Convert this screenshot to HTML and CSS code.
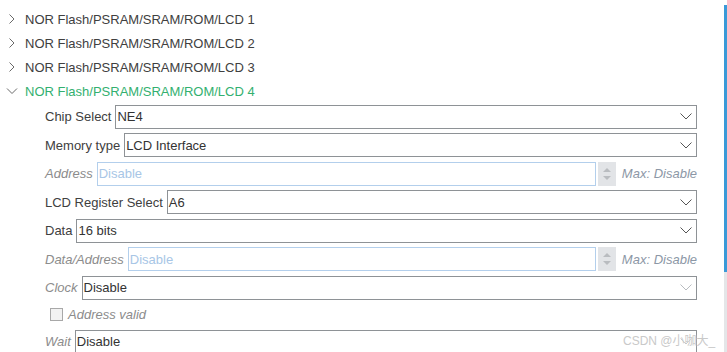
FILE: index.html
```html
<!DOCTYPE html>
<html>
<head>
<meta charset="utf-8">
<link rel="stylesheet" href="styles.css">
</head>
<body>
<div class="page">
  <div class="tree">
    <div class="node">
      <svg class="chev" viewBox="0 0 8 12" width="8" height="12"><path d="M1.5 1.5 L6 6 L1.5 10.5" fill="none" stroke="#6a6a6a" stroke-width="1"/></svg>
      <span>NOR Flash/PSRAM/SRAM/ROM/LCD 1</span>
    </div>
    <div class="node">
      <svg class="chev" viewBox="0 0 8 12" width="8" height="12"><path d="M1.5 1.5 L6 6 L1.5 10.5" fill="none" stroke="#6a6a6a" stroke-width="1"/></svg>
      <span>NOR Flash/PSRAM/SRAM/ROM/LCD 2</span>
    </div>
    <div class="node">
      <svg class="chev" viewBox="0 0 8 12" width="8" height="12"><path d="M1.5 1.5 L6 6 L1.5 10.5" fill="none" stroke="#6a6a6a" stroke-width="1"/></svg>
      <span>NOR Flash/PSRAM/SRAM/ROM/LCD 3</span>
    </div>
    <div class="node open">
      <svg class="chev down" viewBox="0 0 12 8" width="12" height="8"><path d="M1 1.5 L6 6.5 L11 1.5" fill="none" stroke="#6a6a6a" stroke-width="1"/></svg>
      <span>NOR Flash/PSRAM/SRAM/ROM/LCD 4</span>
    </div>
  </div>

  <div class="form">
    <div class="row">
      <span class="label">Chip Select</span>
      <div class="select"><span class="val">NE4</span><svg class="arrow" viewBox="0 0 12 7" width="12" height="7"><path d="M0.5 0.5 L6 6 L11.5 0.5" fill="none" stroke="#555" stroke-width="1"/></svg></div>
    </div>
    <div class="row">
      <span class="label">Memory type</span>
      <div class="select"><span class="val">LCD Interface</span><svg class="arrow" viewBox="0 0 12 7" width="12" height="7"><path d="M0.5 0.5 L6 6 L11.5 0.5" fill="none" stroke="#555" stroke-width="1"/></svg></div>
    </div>
    <div class="row">
      <span class="label dis">Address</span>
      <div class="input dis"><span class="val">Disable</span></div>
      <div class="spin"><svg viewBox="0 0 18 24" width="18" height="24"><path d="M5 10 L9 6 L13 10 Z" fill="#b9bcc0"/><path d="M5 14 L9 18 L13 14 Z" fill="#b9bcc0"/></svg></div>
      <span class="max">Max: Disable</span>
    </div>
    <div class="row">
      <span class="label">LCD Register Select</span>
      <div class="select"><span class="val">A6</span><svg class="arrow" viewBox="0 0 12 7" width="12" height="7"><path d="M0.5 0.5 L6 6 L11.5 0.5" fill="none" stroke="#555" stroke-width="1"/></svg></div>
    </div>
    <div class="row">
      <span class="label">Data</span>
      <div class="select"><span class="val">16 bits</span><svg class="arrow" viewBox="0 0 12 7" width="12" height="7"><path d="M0.5 0.5 L6 6 L11.5 0.5" fill="none" stroke="#555" stroke-width="1"/></svg></div>
    </div>
    <div class="row">
      <span class="label dis">Data/Address</span>
      <div class="input dis"><span class="val">Disable</span></div>
      <div class="spin"><svg viewBox="0 0 18 24" width="18" height="24"><path d="M5 10 L9 6 L13 10 Z" fill="#b9bcc0"/><path d="M5 14 L9 18 L13 14 Z" fill="#b9bcc0"/></svg></div>
      <span class="max">Max: Disable</span>
    </div>
    <div class="row">
      <span class="label dis">Clock</span>
      <div class="select"><span class="val">Disable</span><svg class="arrow" viewBox="0 0 12 7" width="12" height="7"><path d="M0.5 0.5 L6 6 L11.5 0.5" fill="none" stroke="#b8bcc0" stroke-width="1"/></svg></div>
    </div>
    <div class="row check">
      <span class="box"></span>
      <span class="label dis">Address valid</span>
    </div>
    <div class="row">
      <span class="label dis">Wait</span>
      <div class="select"><span class="val">Disable</span><svg class="arrow" viewBox="0 0 12 7" width="12" height="7"><path d="M0.5 0.5 L6 6 L11.5 0.5" fill="none" stroke="#b8bcc0" stroke-width="1"/></svg></div>
    </div>
  </div>
</div>
<div class="scrollbar"><div class="thumb"></div></div>
<div class="watermark">CSDN @小咖大_</div>
</body>
</html>
```

FILE: styles.css
```css
html, body {
  margin: 0;
  padding: 0;
  background: #ffffff;
  overflow: hidden;
}
body {
  width: 727px;
  height: 352px;
  position: relative;
  font-family: "Liberation Sans", Arial, "Noto Sans CJK SC", sans-serif;
  font-size: 13px;
  color: #404040;
}
.page {
  padding: 7px 30px 0 0;
}
.tree {
  display: flex;
  flex-direction: column;
}
.node {
  height: 24px;
  display: flex;
  align-items: center;
  padding-left: 8px;
}
.node .chev {
  width: 8px;
  margin-right: 9px;
}
.node .chev.down {
  width: 12px;
  margin-left: -2px;
  margin-right: 7px;
}
.node.open span {
  color: #33b06f;
}
.form {
  display: flex;
  flex-direction: column;
  gap: 4.5px;
  padding-left: 45px;
  margin-top: 1.5px;
}
.row {
  height: 24px;
  display: flex;
  align-items: center;
}
.label {
  white-space: nowrap;
  margin-right: 4px;
}
.label.dis {
  font-style: italic;
  color: #8c8c8c;
}
.select, .input {
  flex: 1;
  height: 24px;
  box-sizing: border-box;
  border: 1px solid #8e9296;
  display: flex;
  align-items: center;
  padding-left: 1px;
  padding-right: 4px;
}
.select .val, .input .val {
  flex: 1;
  color: #333;
}
.input.dis {
  border-color: #b3cfec;
}
.input.dis .val {
  color: #a8c6e6;
}
.spin {
  width: 18px;
  height: 24px;
  margin-left: 2px;
  background: #e2e4e7;
  display: flex;
}
.max {
  margin-left: 6px;
  font-style: italic;
  color: #8c97a6;
  white-space: nowrap;
}
.row.check {
  height: 21px;
  padding-left: 5px;
}
.check .box {
  width: 11px;
  height: 11px;
  border: 1px solid #a8a8a8;
  background: #f2f2f2;
  margin-right: 5px;
}
.scrollbar {
  position: absolute;
  right: 0;
  top: 5px;
  width: 3px;
  height: 347px;
  background: #e4e6e8;
}
.scrollbar .thumb {
  width: 3px;
  height: 267px;
  background: #3a9ad8;
}
.watermark {
  position: absolute;
  left: 623px;
  top: 331px;
  font-size: 12px;
  color: #c9c9c9;
  text-shadow: 0 0 2px #ffffff;
  white-space: nowrap;
}
```
